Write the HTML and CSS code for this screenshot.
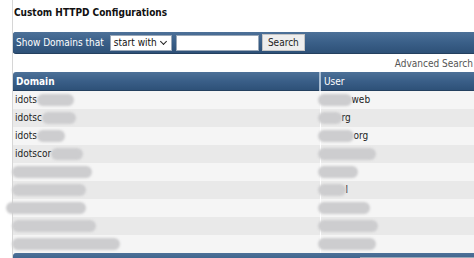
FILE: index.html
```html
<!DOCTYPE html>
<html lang="en">
<head>
    <meta charset="UTF-8">
    <title>Custom HTTPD Configurations</title>
    <link rel="stylesheet" href="styles.css">
</head>
<body>
    <div class="page">
        <h1 class="title">Custom HTTPD Configurations</h1>

        <div class="search-bar">
            <span class="search-label">Show Domains that</span>
            <span class="select-box">start with <span class="caret"></span></span>
            <input class="search-input" type="text">
            <button class="search-btn" type="button">Search</button>
            <span class="bar-fill"></span>
        </div>

        <div class="advanced">Advanced Search</div>

        <table class="list">
            <thead>
                <tr>
                    <th class="col-domain">Domain</th>
                    <th class="col-user">User</th>
                </tr>
            </thead>
            <tbody>
                <tr>
                    <td>idots<span class="blur" style="width:37px"></span></td>
                    <td><span class="blur lead" style="width:34px"></span>web</td>
                </tr>
                <tr>
                    <td>idotsc<span class="blur" style="width:34px"></span></td>
                    <td><span class="blur lead" style="width:24px"></span>rg</td>
                </tr>
                <tr>
                    <td>idots<span class="blur" style="width:28px"></span></td>
                    <td><span class="blur lead" style="width:36px"></span>org</td>
                </tr>
                <tr>
                    <td>idotscor<span class="blur" style="width:32px"></span></td>
                    <td><span class="blur lead" style="width:58px"></span></td>
                </tr>
                <tr>
                    <td><span class="blur first" style="width:80px"></span></td>
                    <td><span class="blur lead" style="width:40px"></span></td>
                </tr>
                <tr>
                    <td><span class="blur first" style="width:74px"></span></td>
                    <td><span class="blur lead" style="width:28px"></span>l</td>
                </tr>
                <tr>
                    <td><span class="blur first wide" style="width:80px"></span></td>
                    <td><span class="blur lead" style="width:52px"></span></td>
                </tr>
                <tr>
                    <td><span class="blur first" style="width:84px"></span></td>
                    <td><span class="blur lead" style="width:60px"></span></td>
                </tr>
                <tr>
                    <td><span class="blur first" style="width:108px"></span></td>
                    <td><span class="blur lead" style="width:58px"></span></td>
                </tr>
            </tbody>
        </table>

        <div class="footer-bar">
            <span class="footer-box"></span>
        </div>
    </div>
</body>
</html>
```

FILE: styles.css
```css
body {
    margin: 0;
    padding: 0;
    background: #ffffff;
    font-family: "DejaVu Sans Condensed", "DejaVu Sans", Verdana, sans-serif;
    font-stretch: condensed;
    font-size: 10px;
    color: #222;
    overflow: hidden;
}
.page {
    margin-left: 12px;
    border-left: 1px solid #d6d6d6;
    min-height: 258px;
    padding-top: 6px;
}
.title {
    font-size: 10px;
    font-weight: bold;
    margin: 0 0 0 1px;
    height: 13px;
    line-height: 13px;
    color: #111;
}
.search-bar {
    display: flex;
    align-items: center;
    gap: 4px;
    height: 21px;
    margin-top: 13px;
    padding: 0 0 0 3px;
    border-radius: 3px 0 0 3px;
    background-color: #3a5f88;
    background-image: linear-gradient(#4d7198, #3a5f88 50%, #2e5178);
    border-bottom: 1px solid #24405f;
}
.bar-fill {
    flex: 1;
    align-self: stretch;
}
.search-label {
    color: #ffffff;
    margin-right: 2px;
}
.select-box {
    display: flex;
    align-items: center;
    box-sizing: border-box;
    width: 62px;
    height: 16px;
    padding: 0 3px;
    background: #fff;
    color: #111;
    border: 1px solid #9aa8b8;
}
.caret {
    width: 4px;
    height: 4px;
    margin: -3px 0 0 4px;
    border-right: 1.5px solid #222;
    border-bottom: 1.5px solid #222;
    transform: rotate(45deg);
}
.search-input {
    box-sizing: border-box;
    width: 83px;
    height: 16px;
    margin: 0;
    padding: 1px 2px;
    border: 1px solid #9aa8b8;
    background: #fff;
}
.search-btn {
    box-sizing: border-box;
    width: 43px;
    height: 17px;
    margin: 0 0 0 -1px;
    padding: 0;
    font-family: inherit;
    font-stretch: condensed;
    font-size: 10px;
    color: #222;
    background: #eeeeee;
    border: 1px solid #c4c4c4;
}
.advanced {
    text-align: right;
    color: #555;
    margin-top: 3px;
    height: 13px;
    line-height: 13px;
    margin-right: 1px;
}
.list {
    width: 100%;
    border-collapse: collapse;
    margin-top: 2px;
}
.list th {
    height: 18px;
    padding: 0 3px;
    text-align: left;
    color: #ffffff;
    background: linear-gradient(#4d7198, #3a5f88 50%, #2e5178);
    border-bottom: 1px solid #24405f;
}
.list th.col-domain {
    width: 300px;
    font-weight: bold;
    border-radius: 3px 0 0 0;
}
.list th.col-user {
    font-weight: normal;
    border-left: 2px solid #a9bdd2;
}
.list td {
    height: 18px;
    padding: 0 2px;
    white-space: nowrap;
    font-size: 10px;
    color: #222;
}
.list td + td {
    border-left: 1px solid #ffffff;
}
.list tbody tr:nth-child(odd) {
    background: #f5f5f5;
}
.list tbody tr:nth-child(even) {
    background: #e9e9e9;
}
.blur {
    display: inline-block;
    height: 12px;
    vertical-align: middle;
    background: #cdcdcf;
    border-radius: 7px;
    filter: blur(0.8px);
}
.blur.lead {
    margin-left: -5px;
}
.blur.first {
    margin-left: -3px;
}
.blur.wide {
    margin-left: -9px;
}
.footer-bar {
    display: flex;
    justify-content: flex-end;
    height: 8px;
    background: linear-gradient(#4d7198, #3a5f88);
    border-radius: 3px 0 0 0;
}
.footer-box {
    width: 112px;
    height: 4px;
    margin-top: 4px;
    background: #fff;
    border: 1px solid #9aa8b8;
}
```
